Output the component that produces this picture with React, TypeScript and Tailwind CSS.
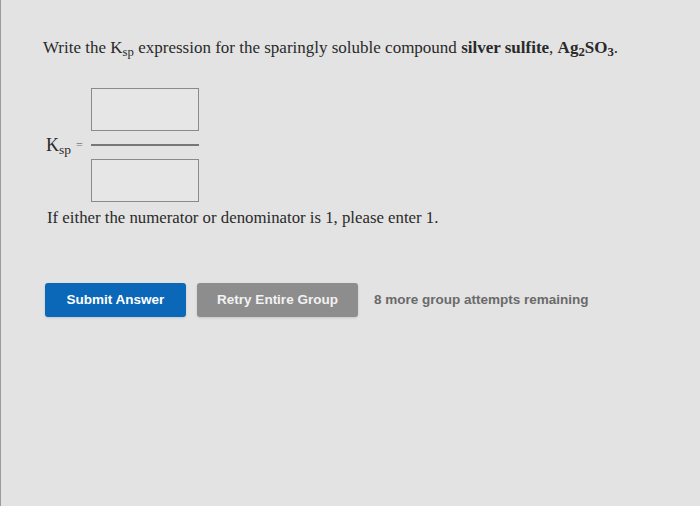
import type { ReactNode } from "react";

// Quadro de resposta: enunciado, fração Ksp com dois campos e ações.

function Sub({ children }: { children: ReactNode }) {
  return <sub className="relative top-[3px] align-baseline text-[0.75em] leading-none">{children}</sub>;
}

function CampoFracao() {
  return <div className="h-[43px] w-[108px] border border-[#8a8a8a] bg-[#e6e6e6]" />;
}

export default function App() {
  return (
    <div className="h-[506px] w-[700px] overflow-hidden border-l border-[#9a9a9a] bg-[#e3e3e3] font-['Liberation_Serif',serif] text-[#2a2a2a]">
      <p className="pl-[42px] pt-[38px] text-[17px] leading-[20px]">
        Write the K<Sub>sp</Sub> expression for the sparingly soluble compound{" "}
        <b>silver sulfite</b>, <b>Ag<Sub>2</Sub>SO<Sub>3</Sub></b>.
      </p>

      <div className="mt-[30px] flex items-center pl-[45px]">
        <span className="text-[18px] leading-none">
          K<Sub>sp</Sub>
        </span>
        <span className="ml-[5px] mr-[8px] text-[12px] text-[#777]">=</span>
        <div className="flex flex-col">
          <CampoFracao />
          <div className="my-[13px] h-[2px] w-[108px] bg-[#777]" />
          <CampoFracao />
        </div>
      </div>

      <p className="mt-[6px] pl-[46px] text-[16.8px] leading-[20px]">
        If either the numerator or denominator is 1, please enter 1.
      </p>

      <div className="mt-[55px] flex items-center pl-[44px] font-['Liberation_Sans',sans-serif] text-[13.5px] font-bold">
        <button className="h-[34px] w-[141px] rounded-[3px] bg-[#0b68b8] text-white shadow-sm">
          Submit Answer
        </button>
        <button className="ml-[11px] h-[34px] w-[161px] rounded-[3px] bg-[#8d8d8d] text-[#f2f2f2] shadow-sm">
          Retry Entire Group
        </button>
        <span className="ml-[16px] text-[#6a6a6a]">8 more group attempts remaining</span>
      </div>
    </div>
  );
}
